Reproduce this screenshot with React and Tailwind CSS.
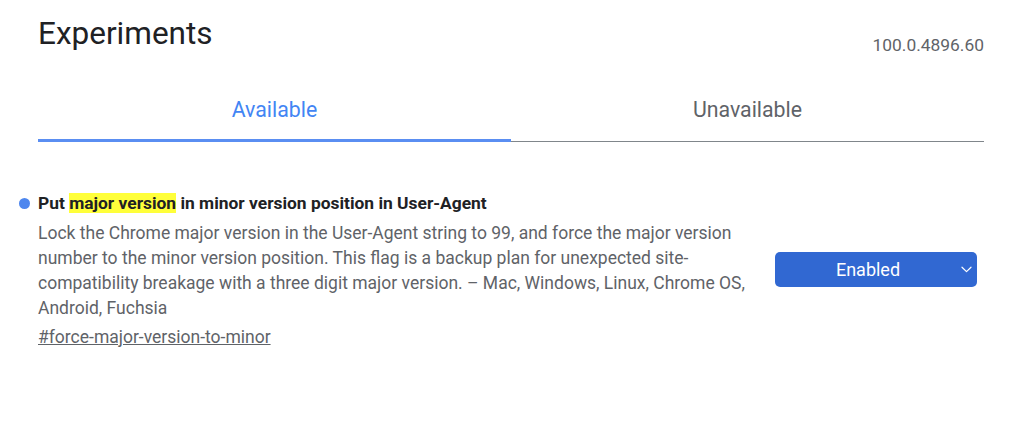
import { useState } from "react";

const Chevron = () => (
	<svg width="11" height="7" viewBox="0 0 11 7" fill="none" className="mr-[5px] shrink-0">
		<path d="M1 1.2 L5.5 5.6 L10 1.2" stroke="white" strokeWidth="1.2" strokeLinecap="round" strokeLinejoin="round" />
	</svg>
);

const App = () => {
	const [tab, setTab] = useState("available");

	return (
		<div className="min-h-screen bg-white font-['Roboto',sans-serif]">
			<div className="pl-[38px] pr-[40px]">
				{/* Header */}
				<header className="flex items-start justify-between pt-[16px]">
					<h1 className="text-[31.5px] leading-[36px] font-normal text-[#202124]">Experiments</h1>
					<span className="mt-[19px] text-[17.4px] leading-[20px] text-[#5f6368]">100.0.4896.60</span>
				</header>

				{/* Tabs */}
				<div className="flex mt-[43px]">
					<button
						onClick={() => setTab("available")}
						className={`flex-1 text-center text-[21.3px] leading-[24px] ${
							tab === "available"
								? "text-[#4285f4] pb-[17px] border-b-[3px] border-[#5a8ef2]"
								: "text-[#5f6368] pb-[19px] border-b border-[#80868b]"
						}`}
					>
						Available
					</button>
					<button
						onClick={() => setTab("unavailable")}
						className={`flex-1 text-center text-[21.3px] leading-[24px] ${
							tab === "unavailable"
								? "text-[#4285f4] pb-[17px] border-b-[3px] border-[#5a8ef2]"
								: "text-[#5f6368] pb-[19px] border-b border-[#80868b]"
						}`}
					>
						Unavailable
					</button>
				</div>

				{/* Experiment */}
				<div className="mt-[51px]">
					<div className="flex items-center -ml-[19px]">
						<span className="w-[11px] h-[11px] rounded-full bg-[#4d86ee] mr-[8px] shrink-0"></span>
						<h2 className="text-[17.4px] leading-[20px] font-bold text-[#202124]">
							Put <span className="bg-[#ffff3a]">major version</span> in minor version position in User-Agent
						</h2>
					</div>
					<div className="flex items-start mt-[8px]">
						<div className="w-[722px] text-[17.5px] leading-[25px] text-[#5f6368]">
							<p>
								Lock the Chrome major version in the User-Agent string to 99, and force the major version number to the minor version position. This flag is a backup plan for unexpected site-compatibility breakage with a three digit major version. – Mac, Windows, Linux, Chrome OS, Android, Fuchsia
							</p>
							<a href="#force-major-version-to-minor" className="block mt-[4px] underline text-[#5f6368]">
								#force-major-version-to-minor
							</a>
						</div>
						<button className="ml-auto mr-[7px] mt-[31px] w-[202px] h-[35px] flex items-center rounded-[5px] bg-[#3168d2] text-white text-[18px]">
							<span className="flex-1 text-center">Enabled</span>
							<Chevron />
						</button>
					</div>
				</div>
			</div>
		</div>
	);
};

export default App;
